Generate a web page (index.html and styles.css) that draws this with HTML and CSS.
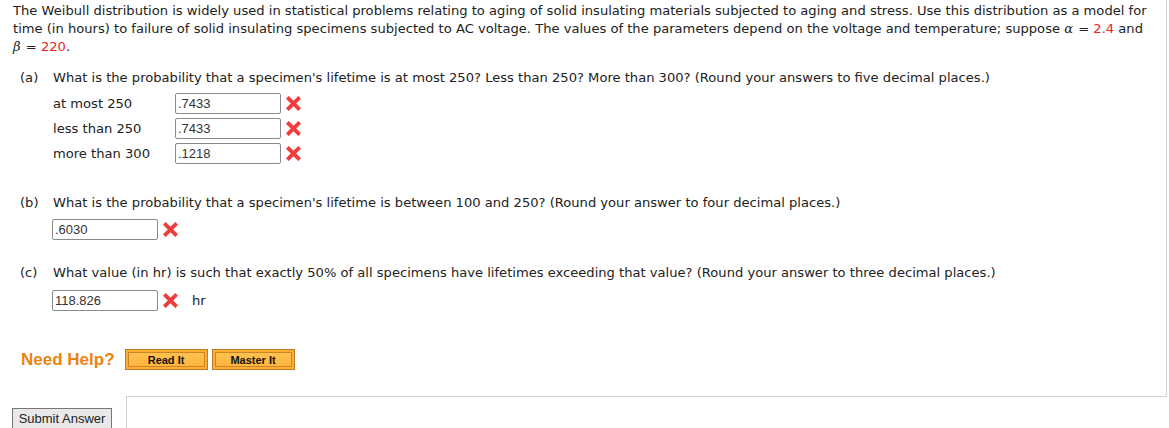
FILE: index.html
```html
<!DOCTYPE html>
<html>
<head>
<meta charset="utf-8">
<link rel="stylesheet" href="styles.css">
</head>
<body>
<div class="card">
  <p class="intro">The Weibull distribution is widely used in statistical problems relating to aging of solid insulating materials subjected to aging and stress. Use this distribution as a model for time (in hours) to failure of solid insulating specimens subjected to AC voltage. The values of the parameters depend on the voltage and temperature; suppose <i class="math">α</i> = <span class="red">2.4</span> and <span class="nowrap"><i class="math">β</i> = <span class="red">220</span>.</span></p>

  <div class="part part-a">
    <div class="qline"><span class="plabel">(a)</span><span>What is the probability that a specimen's lifetime is at most 250? Less than 250? More than 300? (Round your answers to five decimal places.)</span></div>
    <div class="grid">
      <span class="rlabel">at most 250</span>
      <span class="field">.7433</span>
      <svg class="xmark" viewBox="0 0 14 14"><path d="M2.5 2.5 L11.5 11.5 M11.5 2.5 L2.5 11.5"/></svg>
      <span class="rlabel">less than 250</span>
      <span class="field">.7433</span>
      <svg class="xmark" viewBox="0 0 14 14"><path d="M2.5 2.5 L11.5 11.5 M11.5 2.5 L2.5 11.5"/></svg>
      <span class="rlabel">more than 300</span>
      <span class="field">.1218</span>
      <svg class="xmark" viewBox="0 0 14 14"><path d="M2.5 2.5 L11.5 11.5 M11.5 2.5 L2.5 11.5"/></svg>
    </div>
  </div>

  <div class="part part-b">
    <div class="qline"><span class="plabel">(b)</span><span>What is the probability that a specimen's lifetime is between 100 and 250? (Round your answer to four decimal places.)</span></div>
    <div class="arow">
      <span class="field">.6030</span>
      <svg class="xmark" viewBox="0 0 14 14"><path d="M2.5 2.5 L11.5 11.5 M11.5 2.5 L2.5 11.5"/></svg>
    </div>
  </div>

  <div class="part part-c">
    <div class="qline"><span class="plabel">(c)</span><span>What value (in hr) is such that exactly 50% of all specimens have lifetimes exceeding that value? (Round your answer to three decimal places.)</span></div>
    <div class="arow">
      <span class="field">118.826</span>
      <svg class="xmark" viewBox="0 0 14 14"><path d="M2.5 2.5 L11.5 11.5 M11.5 2.5 L2.5 11.5"/></svg>
      <span class="unit">hr</span>
    </div>
  </div>

  <div class="help">
    <span class="need">Need Help?</span>
    <button class="obtn obtn-read">Read It</button>
    <button class="obtn obtn-master">Master It</button>
  </div>
</div>
<div class="footer">
  <div class="submit-cell"><button class="submit">Submit Answer</button></div>
  <div class="after"></div>
</div>
</body>
</html>
```

FILE: styles.css
```css
html, body {
  margin: 0;
  padding: 0;
  background: #fff;
}
body {
  font-family: "DejaVu Sans", Verdana, sans-serif;
  font-size: 13.1px;
  color: #222;
  width: 1169px;
  height: 428px;
  overflow: hidden;
}
.card {
  width: 1167px;
  height: 396px;
  box-sizing: border-box;
  padding: 2px 0 0 13px;
  border-right: 1px solid #cfcfcf;
  border-bottom-right-radius: 3px;
}
.intro {
  margin: 0;
  line-height: 18px;
}
.nowrap {
  white-space: nowrap;
}
.math {
  font-family: "DejaVu Serif", serif;
  display: inline-block;
  padding-right: 1px;
}
.red {
  color: #ee1c1c;
}
.part-a { margin-top: 13px; }
.part-b { margin-top: 28px; }
.part-c { margin-top: 22px; }
.qline {
  display: flex;
  line-height: 18px;
  padding-left: 7px;
}
.plabel {
  width: 33px;
  flex: none;
}
.grid {
  margin-top: 4px;
  margin-left: 40px;
  display: grid;
  grid-template-columns: 122px 106px 22px;
  grid-auto-rows: 25px;
  align-items: center;
}
.arow {
  margin-top: 5px;
  margin-left: 39px;
  height: 25px;
  display: flex;
  align-items: center;
}
.part-c .arow { margin-top: 6px; }
.field {
  box-sizing: border-box;
  width: 106px;
  height: 21px;
  border: 1px solid #8a8a8a;
  border-radius: 2px;
  font-family: "Liberation Sans", Arial, sans-serif;
  font-size: 13px;
  color: #333;
  line-height: 19px;
  padding-left: 2px;
}
.xmark {
  width: 15px;
  height: 15px;
  margin-left: 5px;
  display: block;
}
.xmark path {
  stroke: #f03c3c;
  stroke-width: 3.6;
  stroke-linecap: square;
  fill: none;
}
.unit {
  margin-left: 14px;
}
.help {
  margin-top: 36px;
  margin-left: 8px;
  display: flex;
  align-items: center;
  height: 21px;
}
.need {
  font-family: "Liberation Sans", Arial, sans-serif;
  font-weight: bold;
  font-size: 17px;
  color: #ec8311;
  margin-right: 10px;
}
.obtn {
  box-sizing: border-box;
  height: 21px;
  width: 83px;
  margin: 0 4px 0 0;
  padding: 0;
  border: 1px solid #bd7b26;
  background: linear-gradient(#ffc455, #ffb33a);
  box-shadow: inset 0 0 0 2px #ffae35, inset 0 0 0 3px #cf8526;
  font-family: "Liberation Sans", Arial, sans-serif;
  font-weight: bold;
  font-size: 11px;
  color: #111;
}
.footer {
  display: flex;
}
.submit-cell {
  width: 126px;
  padding: 12px 0 0 12px;
  box-sizing: border-box;
}
.submit {
  box-sizing: border-box;
  width: 100px;
  height: 21px;
  padding: 0;
  border: 1px solid #777;
  background: #e9e9e9;
  font-family: "Liberation Sans", Arial, sans-serif;
  font-size: 13px;
  color: #222;
}
.after {
  flex: 1;
  height: 40px;
  margin-right: 2px;
  border-left: 1px solid #cfcfcf;
  border-top: 1px solid #cfcfcf;
}
```
